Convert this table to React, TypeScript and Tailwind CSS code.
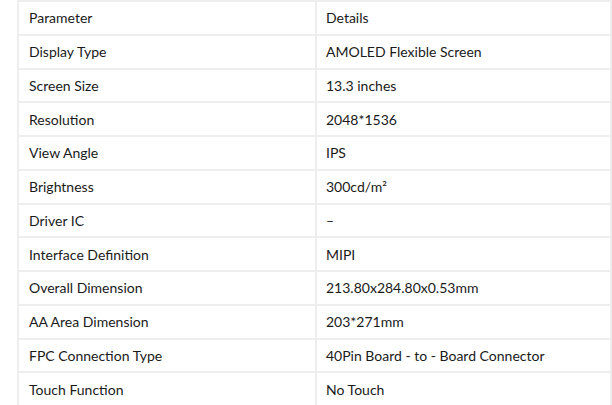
import React from 'react';

const rows: [string, string][] = [
  ['Parameter', 'Details'],
  ['Display Type', 'AMOLED Flexible Screen'],
  ['Screen Size', '13.3 inches'],
  ['Resolution', '2048*1536'],
  ['View Angle', 'IPS'],
  ['Brightness', '300cd/m²'],
  ['Driver IC', '–'],
  ['Interface Definition', 'MIPI'],
  ['Overall Dimension', '213.80x284.80x0.53mm'],
  ['AA Area Dimension', '203*271mm'],
  ['FPC Connection Type', '40Pin Board - to - Board Connector'],
  ['Touch Function', 'No Touch'],
];

const App: React.FC = () => {
  return (
    <div className="w-[612px] h-[405px] overflow-hidden bg-white">
      <div
        className="ml-[17px] w-[595px] border-x-2 border-t-2 border-[#eeeeee] text-[14px] text-[#1a1a1a]"
        style={{ fontFamily: 'Lato, "Liberation Sans", sans-serif' }}
      >
        {rows.map(([param, detail], i) => (
          <div key={i} className="flex h-[33.75px] border-b-2 border-[#eeeeee]">
            <div className="w-[298px] shrink-0 border-r-2 border-[#eeeeee] pl-[10px] flex items-center">
              {param}
            </div>
            <div className="flex-1 pl-[9px] flex items-center">{detail}</div>
          </div>
        ))}
      </div>
    </div>
  );
};

export default App;
